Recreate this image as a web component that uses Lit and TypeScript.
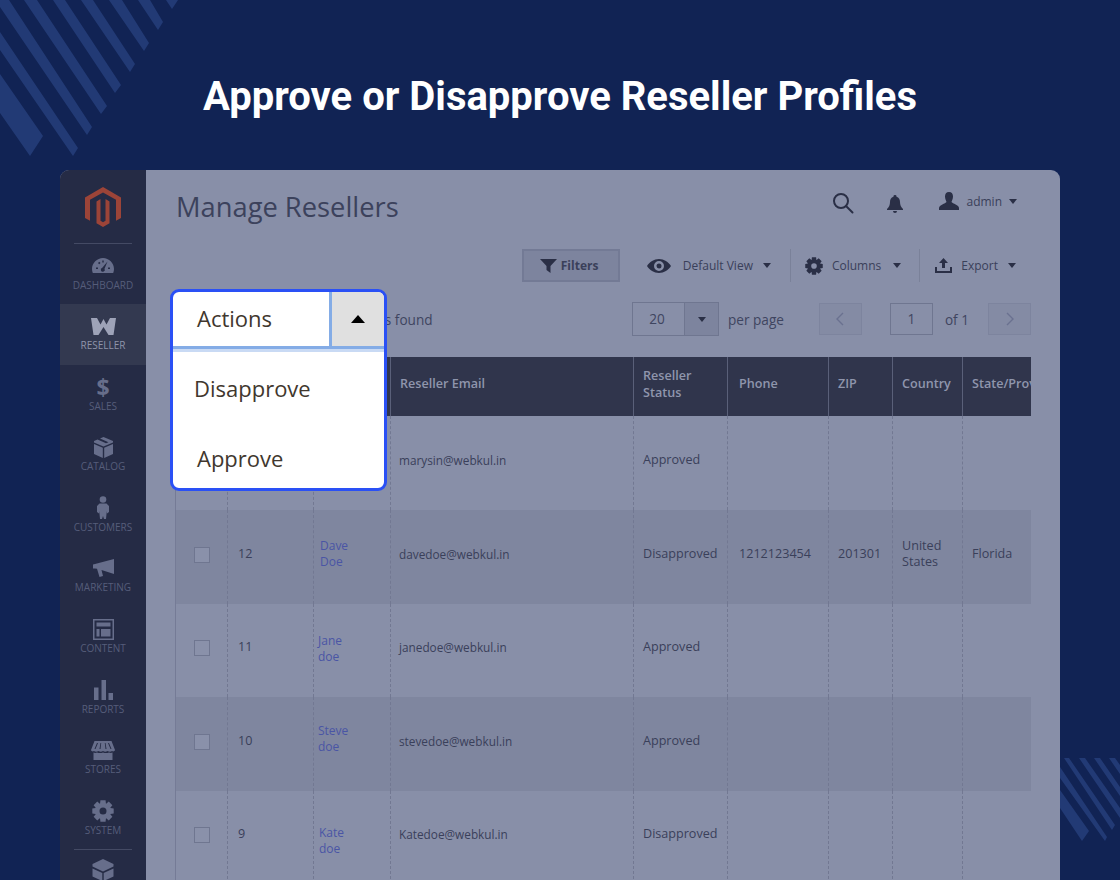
import { LitElement, css, html, svg } from "lit";
import { customElement } from "lit/decorators.js";

// builds a gear outline, used by the sidebar and the Columns button
function gear(cx: number, cy: number, outer: number, inner: number, hole: number, teeth = 8) {
  let d = "";
  const step = (Math.PI * 2) / teeth;
  for (let i = 0; i < teeth; i++) {
    const a = i * step - step / 2;
    const pts = [
      [inner, a + step * 0.02],
      [outer, a + step * 0.2],
      [outer, a + step * 0.8],
      [inner, a + step * 0.98],
    ];
    for (const [r, t] of pts) {
      d += `${d ? "L" : "M"}${(cx + r * Math.cos(t)).toFixed(2)} ${(cy + r * Math.sin(t)).toFixed(2)}`;
    }
  }
  d += `ZM${cx + hole} ${cy}A${hole} ${hole} 0 1 0 ${cx - hole} ${cy}A${hole} ${hole} 0 1 0 ${cx + hole} ${cy}Z`;
  return d;
}

const navIcons: Record<string, unknown> = {
  dashboard: html`<svg width="22" height="15" viewBox="0 0 22 15"><path fill-rule="evenodd" d="M11 0C5 0 0 5 0 11c0 1.500.3 2.800.8 4h20.400c.5-1.200.8-2.500.8-4C22 5 17 0 11 0ZM15.500 3.500l-3 7.200a2 2 0 1 1-2.200-.9ZM4 9.500h2v1.500H4ZM16 9.500h2v1.500h-2ZM6 5l1.300-1.200 1.200 1.300-1.300 1.200ZM10.300 2.500h1.400v2h-1.400Z"/></svg>`,
  reseller: html`<svg width="25" height="17" viewBox="0 0 25 17"><path d="M0 0h6l3.500 6.500 3-5.500 3 5.500L19 0h6l-2.500 17h-5l-5-8-5 8h-5Z"/></svg>`,
  sales: html`<span class="dollar">$</span>`,
  catalog: html`<svg width="19" height="21" viewBox="0 0 19 21"><path d="M9.500 0 19 4v1.500L9.500 9.500 0 5.500V4l3.500-1.500L12 6.300l2.500-1L6 1.500ZM0 7l8.800 3.800V21L0 17ZM19 7v10l-8.800 4V10.800Z"/></svg>`,
  customers: html`<svg width="12" height="23" viewBox="0 0 12 23"><circle cx="6" cy="3.500" r="3.300"/><path d="M2.500 7.500h7L12 10v6l-2 1.500V15l-.5 3L9 23H7l-1-3-1 3H3l-.5-5L2 15v2.500L0 16v-6Z"/></svg>`,
  marketing: html`<svg width="21" height="18" viewBox="0 0 21 18"><path d="M21 0v15L8.500 11l1.500 6-3.500 1L4 9.800 2 9.500H0v-4l2-.5Z"/></svg>`,
  content: html`<svg width="21" height="21" viewBox="0 0 21 21"><path fill-rule="evenodd" d="M0 0h21v21H0Zm1.500 1.500v18h18v-18ZM3.500 3.500h14v4h-14ZM3.500 10h3v7.500h-3ZM8 10h9.500v7.500H8Z"/></svg>`,
  reports: html`<svg width="19" height="20" viewBox="0 0 19 20"><path d="M0 7.500h4.500V20H0ZM7.500 0H12v20H7.500ZM14.500 13H19v7h-4.500Z"/></svg>`,
  stores: html`<svg width="24" height="19" viewBox="0 0 24 19"><path fill-rule="evenodd" d="M3.500 0h17L24 9c-.5 1.500-2 1.800-3 1-1 1-3 1-4.500 0-1.500 1-3 1-4.500 0-1.500 1-3 1-4.500 0-1.500 1-3.500 1-4.500 0-1 .8-2.500.5-3-1ZM6 2 3.500 8h1L7 2ZM9.500 2 8.500 8h1l.7-6ZM13.800 2l.7 6h1l-1-6ZM17 2l2.500 6h1L18 2ZM2.500 11.500c1 .5 2.500.5 3.500 0 2 .8 4 .8 6 0 2 .8 4 .8 6 0 1 .5 2.500.5 3.500 0V19h-19Z"/></svg>`,
  system: html`<svg width="22" height="22" viewBox="0 0 22 22"><path fill-rule="evenodd" d="${gear(11, 11, 11, 8, 3.500)}"/></svg>`,
  extensions: html`<svg width="22" height="22" viewBox="0 0 22 22"><path d="M11 0l10.500 5v2.500L11 12.500.5 7.500V5ZM.5 9.500 10.300 14v8L.5 17.500ZM21.500 9.500V17.500L11.700 22v-8Z"/></svg>`,
};

const nav = [
  { key: "dashboard", label: "Dashboard" },
  { key: "reseller", label: "Reseller", active: true },
  { key: "sales", label: "Sales" },
  { key: "catalog", label: "Catalog" },
  { key: "customers", label: "Customers" },
  { key: "marketing", label: "Marketing" },
  { key: "content", label: "Content" },
  { key: "reports", label: "Reports" },
  { key: "stores", label: "Stores" },
  { key: "system", label: "System" },
];

// inset and drop: the name cells sit a little off the grid in the source
const rows = [
  { id: 13, first: "Mary", last: "Sin", inset: 8, drop: 0, email: "marysin@webkul.in", status: "Approved", phone: "", zip: "", country: "", state: "" },
  { id: 12, first: "Dave", last: "Doe", inset: 6, drop: 0, email: "davedoe@webkul.in", status: "Disapproved", phone: "1212123454", zip: "201301", country: "United States", state: "Florida" },
  { id: 11, first: "Jane", last: "doe", inset: 4, drop: 2, email: "janedoe@webkul.in", status: "Approved", phone: "", zip: "", country: "", state: "" },
  { id: 10, first: "Steve", last: "doe", inset: 4, drop: -2, email: "stevedoe@webkul.in", status: "Approved", phone: "", zip: "", country: "", state: "" },
  { id: 9, first: "Kate", last: "doe", inset: 5, drop: 7, email: "Katedoe@webkul.in", status: "Disapproved", phone: "", zip: "", country: "", state: "" },
];

@customElement("app-root")
export class AppRoot extends LitElement {
  static styles = css`
    :host {
      display: block;
      font-family: "Open Sans", sans-serif;
    }
    .stage {
      position: relative;
      height: 880px;
      overflow: hidden;
      background: #112354;
    }
    .stripes {
      position: absolute;
      inset: 0;
      fill: #223a75;
    }
    h1 {
      position: relative;
      height: 170px;
      margin: 0;
      padding-top: 71px;
      box-sizing: border-box;
      font: 700 40px/52px Roboto, sans-serif;
      color: #fff;
      text-align: center;
    }
    .panel {
      position: relative;
      display: flex;
      height: 710px;
      margin: 0 60px;
      overflow: hidden;
      border-radius: 9px 9px 0 0;
      background: #888fa8;
    }
    .side {
      flex: none;
      width: 86px;
      background: #252b45;
    }
    .logo {
      display: flex;
      justify-content: center;
      height: 72.500px;
      box-sizing: border-box;
      padding-top: 17px;
    }
    .logo svg {
      fill: #9c4438;
    }
    .rule {
      height: 1px;
      margin: 0 14px;
      background: #444a64;
    }
    .item {
      display: flex;
      flex-direction: column;
      align-items: center;
      height: 60.600px;
      box-sizing: border-box;
      padding-top: 10px;
      font-size: 10px;
      line-height: 14px;
      text-transform: uppercase;
      color: #565d7a;
    }
    .item svg {
      fill: #676e8b;
    }
    .item.active {
      background: #333950;
      color: #8f94aa;
    }
    .item.active svg {
      fill: #9ea3b8;
    }
    .icon {
      display: flex;
      align-items: center;
      justify-content: center;
      height: 24px;
    }
    .dollar {
      font-size: 23px;
      font-weight: 700;
      line-height: 24px;
      color: #676e8b;
    }
    .extra {
      display: flex;
      justify-content: center;
      padding-top: 9px;
    }
    .extra svg {
      fill: #676e8b;
    }
    .main {
      position: relative;
      flex: 1;
      min-width: 0;
      padding: 0 29px 0 30px;
    }
    .top {
      display: flex;
      align-items: center;
      height: 74px;
      color: #30354c;
    }
    h2 {
      flex: 1;
      margin: 0 0 2px;
      font-size: 27.300px;
      font-weight: 400;
      color: #3c425c;
    }
    .search {
      margin: 0 33px 8px 0;
    }
    .bell {
      margin: 0 36px 6px 0;
    }
    .admin {
      display: flex;
      align-items: center;
      margin: 0 14px 12px 0;
      font-size: 12px;
      color: #3a405a;
    }
    .admin svg {
      margin-right: 7px;
    }
    .caret {
      display: inline-block;
      border-style: solid;
      border-width: 5px 4.500px 0;
      border-color: #2a2f46 transparent transparent;
    }
    .admin .caret {
      margin-left: 7px;
    }
    .tools {
      display: flex;
      align-items: center;
      justify-content: flex-end;
      height: 33px;
      margin-top: 5px;
      font-size: 12px;
      color: #3a405a;
    }
    .filters {
      display: flex;
      align-items: center;
      gap: 4px;
      width: 98px;
      height: 33px;
      box-sizing: border-box;
      padding-left: 16px;
      margin-right: 27px;
      border: 2px solid #737a95;
      background: #7d849e;
      font-weight: 700;
    }
    .tool {
      display: flex;
      align-items: center;
    }
    .tool .caret {
      margin-left: 10px;
    }
    .view svg {
      margin-right: 12px;
    }
    .cols svg {
      margin-right: 9px;
    }
    .cols .caret {
      margin-left: 12px;
    }
    .sep {
      width: 1px;
      height: 33px;
      background: #7a8199;
    }
    .sep.first {
      margin: 0 14px 0 19px;
    }
    .sep.second {
      margin: 0 15px 0 18px;
    }
    .exp {
      margin-right: 15px;
    }
    .exp svg {
      margin-right: 9px;
    }
    .paging {
      display: flex;
      align-items: center;
      height: 34px;
      margin-top: 20px;
      font-size: 13.600px;
      color: #3f4560;
    }
    .found {
      flex: 1;
      padding-left: 148px;
      white-space: nowrap;
    }
    .size {
      display: flex;
      align-items: stretch;
      width: 87px;
      height: 34px;
      box-sizing: border-box;
      margin-right: 9px;
      border: 1px solid #6f7690;
    }
    .size b {
      flex: 1;
      padding-right: 3px;
      font-weight: 400;
      line-height: 32px;
      text-align: center;
    }
    .size i {
      display: flex;
      align-items: center;
      justify-content: center;
      width: 33px;
      border-left: 1px solid #6f7690;
      background: #7d849e;
    }
    .pager {
      display: flex;
      align-items: center;
      justify-content: center;
      width: 43px;
      height: 32px;
      box-sizing: border-box;
      border: 1px solid #7d849e;
      background: #848ba4;
    }
    .pager svg {
      fill: none;
      stroke: #6a7190;
      stroke-width: 1.400;
    }
    .per {
      margin-right: 35px;
    }
    .num {
      width: 43px;
      height: 32px;
      box-sizing: border-box;
      margin: 0 12px 0 28px;
      border: 1px solid #6f7690;
      line-height: 30px;
      text-align: center;
    }
    .of {
      margin-right: 19px;
    }
    .table-clip {
      margin: 21px 0 0 -1px;
      overflow: hidden;
    }
    table {
      width: 917px;
      table-layout: fixed;
      border-collapse: collapse;
      font-size: 12.600px;
      color: #3a405a;
    }
    th {
      height: 59px;
      padding: 0 0 6px 9px;
      border-left: 1px solid #5a6079;
      background: #30354c;
      box-sizing: border-box;
      font-weight: 600;
      line-height: 17px;
      text-align: left;
      color: #8f95ac;
      white-space: normal;
    }
    th.nowrap {
      white-space: nowrap;
    }
    td {
      height: 93.500px;
      padding: 0 0 6px 9px;
      box-sizing: border-box;
      border-left: 1px dashed #727892;
      line-height: 16px;
      vertical-align: middle;
    }
    tbody tr:first-child td {
      height: 94px;
    }
    td:first-child {
      border-left: 1px solid #757b96;
    }
    td:nth-child(2) {
      padding-left: 10px;
    }
    td:nth-child(6),
    th:nth-child(6) {
      padding-left: 11px;
    }
    tr.shade td {
      background: #7f869f;
    }
    .box {
      display: block;
      width: 16px;
      height: 16px;
      box-sizing: border-box;
      margin: 2px 0 0 9px;
      border: 1px solid #6f7690;
      background: #8a91aa;
    }
    td.email {
      padding-left: 8px;
      font-size: 11.800px;
    }
    .link {
      font-size: 12px;
      color: #4a55a5;
    }
    .menu {
      position: absolute;
      left: 24px;
      top: 119px;
      width: 217px;
      height: 202px;
      box-sizing: border-box;
      overflow: hidden;
      border: 3px solid #2a50f5;
      border-radius: 9px;
      background: #fff;
      font-size: 22px;
      color: #41372e;
    }
    .menu-head {
      display: flex;
      height: 60px;
      box-sizing: border-box;
      border-bottom: 3px solid #c9daf4;
    }
    .menu-title {
      flex: 1;
      padding-left: 24px;
      border-bottom: 3px solid #84ace6;
      line-height: 52px;
    }
    .menu-arrow {
      display: flex;
      align-items: center;
      justify-content: center;
      width: 55px;
      box-sizing: border-box;
      border-left: 3px solid #84ace6;
      border-bottom: 3px solid #84ace6;
      background: #e0e0e0;
    }
    .up {
      border-style: solid;
      border-width: 0 7px 8px;
      border-color: transparent transparent #000;
    }
    .menu-item {
      height: 70px;
      line-height: 72px;
    }
    .menu-item.first {
      padding-left: 21px;
    }
    .menu-item.second {
      padding-left: 24px;
    }
  `;

  render() {
    return html`<div class="stage">
      <svg class="stripes" width="1120" height="880" viewBox="0 0 1120 880">
        ${svg`<path d="M0 74 43 136 30 156 0 113ZM0 32 78 148 73 156 0 50ZM9 0 92 127 87 135 0 7V0ZM24 0H37L107 106 101 114ZM53 0H65L121 85 115 93ZM81 0H93L135 64 130 72ZM109 0H122L149 43 144 51ZM138 0H150L163 22 158 30ZM166 0H178L172 9Z"/>
        <path d="M1060 790 1089 831 1082 841 1060 808ZM1060 767 1107 837 1105 841 1060 778ZM1064 758H1069L1115 825 1112 830ZM1079 758H1085L1120 808V818ZM1094 758H1100L1120 787V796ZM1109 758H1115L1120 765V774Z"/>`}
      </svg>
      <h1>Approve or Disapprove Reseller Profiles</h1>
      <div class="panel">
        <nav class="side">
          <div class="logo">
            <svg width="36" height="40" viewBox="0 0 36 40"><path d="M18 0 36 10.400V31L31 33.800V12.800L18 5.400 5 12.800V33.800L0 31V10.400ZM18 40 11.500 36.200V14.400L15.500 12V33.800L18 35.300 20.500 33.800V12L24.500 14.400V36.200Z"/></svg>
          </div>
          <div class="rule"></div>
          ${nav.map(
            (n) => html`<div class="item ${n.active ? "active" : ""}">
              <div class="icon">${navIcons[n.key]}</div>
              ${n.label}
            </div>`
          )}
          <div class="rule"></div>
          <div class="extra">${navIcons.extensions}</div>
        </nav>
        <div class="main">
          <div class="top">
            <h2>Manage Resellers</h2>
            <svg class="search" width="22" height="22" viewBox="0 0 22 22" fill="none" stroke="#2a2f46" stroke-width="2"><circle cx="9" cy="9" r="7"/><path d="m14 14 6.500 6.500" stroke-linecap="round"/></svg>
            <svg class="bell" width="16" height="18" viewBox="0 0 16 18" fill="#2a2f46"><path d="M8 0a1.500 1.500 0 0 1 1.500 1.700C12 2.400 13 4.500 13 7c0 3 1 5 3 7v1H0v-1c2-2 3-4 3-7 0-2.500 1-4.600 3.500-5.300A1.500 1.500 0 0 1 8 0ZM6 16h4a2 2 0 0 1-4 0Z"/></svg>
            <div class="admin">
              <svg width="20" height="18" viewBox="0 0 20 18" fill="#2a2f46"><path d="M10 0c2.800 0 4 2 4 4.500S12.800 9 12.500 10c1 1.500 7.500 3 7.500 6v2H0v-2c0-3 6.500-4.500 7.500-6C7.200 9 6 7 6 4.500S7.200 0 10 0Z"/></svg>
              admin<span class="caret"></span>
            </div>
          </div>
          <div class="tools">
            <div class="filters">
              <svg width="17" height="14" viewBox="0 0 17 14" fill="#2a2f46"><path d="M0 0h17l-6.500 7v7l-4-3V7Z"/></svg>
              Filters
            </div>
            <div class="tool view">
              <svg width="24" height="14" viewBox="0 0 24 14" fill="#2a2f46"><path fill-rule="evenodd" d="M12 0c5 0 9.500 3 12 7-2.500 4-7 7-12 7S2.500 11 0 7c2.500-4 7-7 12-7Zm0 2a5 5 0 1 0 0 10 5 5 0 0 0 0-10Zm0 2.500a2.500 2.500 0 1 1 0 5 2.500 2.500 0 0 1 0-5Z"/></svg>
              Default View<span class="caret"></span>
            </div>
            <div class="sep first"></div>
            <div class="tool cols">
              <svg width="18" height="18" viewBox="0 0 18 18" fill="#2a2f46"><path fill-rule="evenodd" d="${gear(9, 9, 9, 6.500, 2.800)}"/></svg>
              Columns<span class="caret"></span>
            </div>
            <div class="sep second"></div>
            <div class="tool exp">
              <svg width="17" height="15" viewBox="0 0 17 15" fill="#2a2f46"><path d="M8.500 0 13 5h-3v5H7V5H4ZM0 9h2v4h13V9h2v6H0Z"/></svg>
              Export<span class="caret"></span>
            </div>
          </div>
          <div class="paging">
            <div class="found">17 records found</div>
            <div class="size"><b>20</b><i><span class="caret"></span></i></div>
            <div class="per">per page</div>
            <div class="pager"><svg width="10" height="14" viewBox="0 0 10 14"><path d="M8 1 2 7l6 6"/></svg></div>
            <div class="num">1</div>
            <div class="of">of 1</div>
            <div class="pager"><svg width="10" height="14" viewBox="0 0 10 14"><path d="m2 1 6 6-6 6"/></svg></div>
          </div>
          <div class="table-clip">
            <table>
              <colgroup>
                <col style="width:52px" /><col style="width:86px" /><col style="width:77px" /><col style="width:243px" />
                <col style="width:94px" /><col style="width:101px" /><col style="width:64px" /><col style="width:70px" /><col style="width:130px" />
              </colgroup>
              <thead>
                <tr>
                  <th></th><th>ID</th><th>Reseller Name</th><th>Reseller Email</th><th>Reseller Status</th>
                  <th>Phone</th><th>ZIP</th><th>Country</th><th class="nowrap">State/Province</th>
                </tr>
              </thead>
              <tbody>
                ${rows.map(
                  (r, i) => html`<tr class=${i % 2 ? "shade" : ""}>
                    <td><span class="box"></span></td>
                    <td>${r.id}</td>
                    <td
                      class="link"
                      style="padding:${Math.max(0, 2 * r.drop - 6)}px 0 ${Math.max(0, 6 - 2 * r.drop)}px ${r.inset}px"
                    >
                      ${r.first}<br />${r.last}
                    </td>
                    <td class="email">${r.email}</td>
                    <td>${r.status}</td>
                    <td>${r.phone}</td>
                    <td>${r.zip}</td>
                    <td>${r.country}</td>
                    <td>${r.state}</td>
                  </tr>`
                )}
              </tbody>
            </table>
          </div>
          <div class="menu">
            <div class="menu-head">
              <div class="menu-title">Actions</div>
              <div class="menu-arrow"><span class="up"></span></div>
            </div>
            <div class="menu-item first">Disapprove</div>
            <div class="menu-item second">Approve</div>
          </div>
        </div>
      </div>
    </div>`;
  }
}
